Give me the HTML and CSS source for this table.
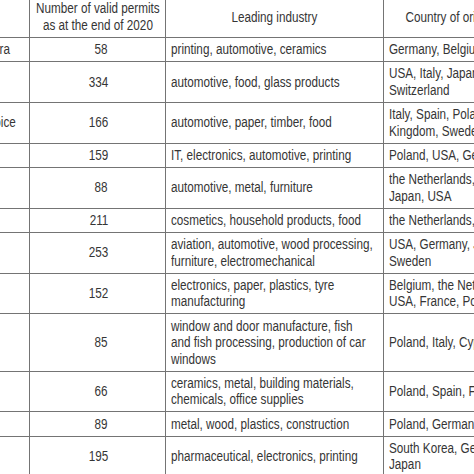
FILE: index.html
```html
<!DOCTYPE html>
<html lang="en">
<head>
<meta charset="utf-8">
<title>Special economic zones</title>
<link rel="stylesheet" href="styles.css">
</head>
<body>
<table class="zones">
  <colgroup>
    <col class="c-name">
    <col class="c-num">
    <col class="c-ind">
    <col class="c-cty">
  </colgroup>
  <thead>
    <tr>
      <th class="name"><div class="hc"><span class="t">SEZ</span></div></th>
      <th><div class="hc"><span class="t">Number of valid permits<br>as at the end of 2020</span></div></th>
      <th><div class="hc"><span class="t">Leading industry</span></div></th>
      <th><div class="hc"><span class="t">Country of origin</span></div></th>
    </tr>
  </thead>
  <tbody>
    <tr><td class="name"><span class="t">Kamienna Góra</span></td><td class="num"><span class="t">58</span></td><td><span class="t">printing, automotive, ceramics</span></td><td><span class="t">Germany, Belgium, Japan</span></td></tr>
    <tr><td class="name"><span class="t">Katowice</span></td><td class="num"><span class="t">334</span></td><td><span class="t">automotive, food, glass products</span></td><td><span class="t">USA, Italy, Japan, Germany,<br>Switzerland</span></td></tr>
    <tr><td class="name"><span class="t">Kostrzyn-Słubice</span></td><td class="num"><span class="t">166</span></td><td><span class="t">automotive, paper, timber, food</span></td><td><span class="t">Italy, Spain, Poland, United<br>Kingdom, Sweden</span></td></tr>
    <tr><td class="name"><span class="t">Kraków</span></td><td class="num"><span class="t">159</span></td><td><span class="t">IT, electronics, automotive, printing</span></td><td><span class="t">Poland, USA, Germany</span></td></tr>
    <tr><td class="name"><span class="t">Legnica</span></td><td class="num"><span class="t">88</span></td><td><span class="t">automotive, metal, furniture</span></td><td><span class="t">the Netherlands, Germany,<br>Japan, USA</span></td></tr>
    <tr><td class="name"><span class="t">Łódź</span></td><td class="num"><span class="t">211</span></td><td><span class="t">cosmetics, household products, food</span></td><td><span class="t">the Netherlands, Poland</span></td></tr>
    <tr><td class="name"><span class="t">Mielec</span></td><td class="num"><span class="t">253</span></td><td><span class="t">aviation, automotive, wood processing,<br>furniture, electromechanical</span></td><td><span class="t">USA, Germany, Japan,<br>Sweden</span></td></tr>
    <tr><td class="name"><span class="t">Pomorska</span></td><td class="num"><span class="t">152</span></td><td><span class="t">electronics, paper, plastics, tyre<br>manufacturing</span></td><td><span class="t">Belgium, the Netherlands,<br>USA, France, Poland</span></td></tr>
    <tr><td class="name"><span class="t">Słupsk</span></td><td class="num"><span class="t">85</span></td><td><span class="t">window and door manufacture, fish<br>and fish processing, production of car<br>windows</span></td><td><span class="t">Poland, Italy, Cyprus</span></td></tr>
    <tr><td class="name"><span class="t">Starachowice</span></td><td class="num"><span class="t">66</span></td><td><span class="t">ceramics, metal, building materials,<br>chemicals, office supplies</span></td><td><span class="t">Poland, Spain, France</span></td></tr>
    <tr><td class="name"><span class="t">Suwałki</span></td><td class="num"><span class="t">89</span></td><td><span class="t">metal, wood, plastics, construction</span></td><td><span class="t">Poland, Germany</span></td></tr>
    <tr><td class="name"><span class="t">Tarnobrzeg</span></td><td class="num"><span class="t">195</span></td><td><span class="t">pharmaceutical, electronics, printing</span></td><td><span class="t">South Korea, Germany,<br>Japan</span></td></tr>
  </tbody>
</table>
</body>
</html>
```

FILE: styles.css
```css
html, body {
  margin: 0;
  padding: 0;
  background: #ffffff;
  overflow: hidden;
}

.zones {
  border-collapse: collapse;
  table-layout: fixed;
  width: 594px;
  margin: -4px 0 0 -81px;
  font-family: "Liberation Sans", Arial, sans-serif;
  font-size: 14px;
  line-height: 16.5px;
  color: #353535;
}

.c-name { width: 110px; }
.c-num { width: 136px; }
.c-ind { width: 218px; }
.c-cty { width: 130px; }

.zones th,
.zones td {
  border: 1px solid #747474;
  padding: 3.375px 5px;
  vertical-align: middle;
  white-space: nowrap;
  overflow: hidden;
  text-align: left;
  font-weight: normal;
}

/* condensed rendering of the face (Arial Narrow look) */
.t {
  display: inline-block;
  transform: scaleX(0.836);
  transform-origin: left center;
  vertical-align: top;
}

.hc {
  display: flex;
  justify-content: center;
  text-align: center;
}

.hc .t {
  flex: none;
  transform-origin: center center;
}

.zones td.name {
  padding-left: 8px;
}

.zones td.num {
  text-align: right;
  padding-right: 57px;
}

.zones td.num .t {
  transform-origin: right center;
}
```
